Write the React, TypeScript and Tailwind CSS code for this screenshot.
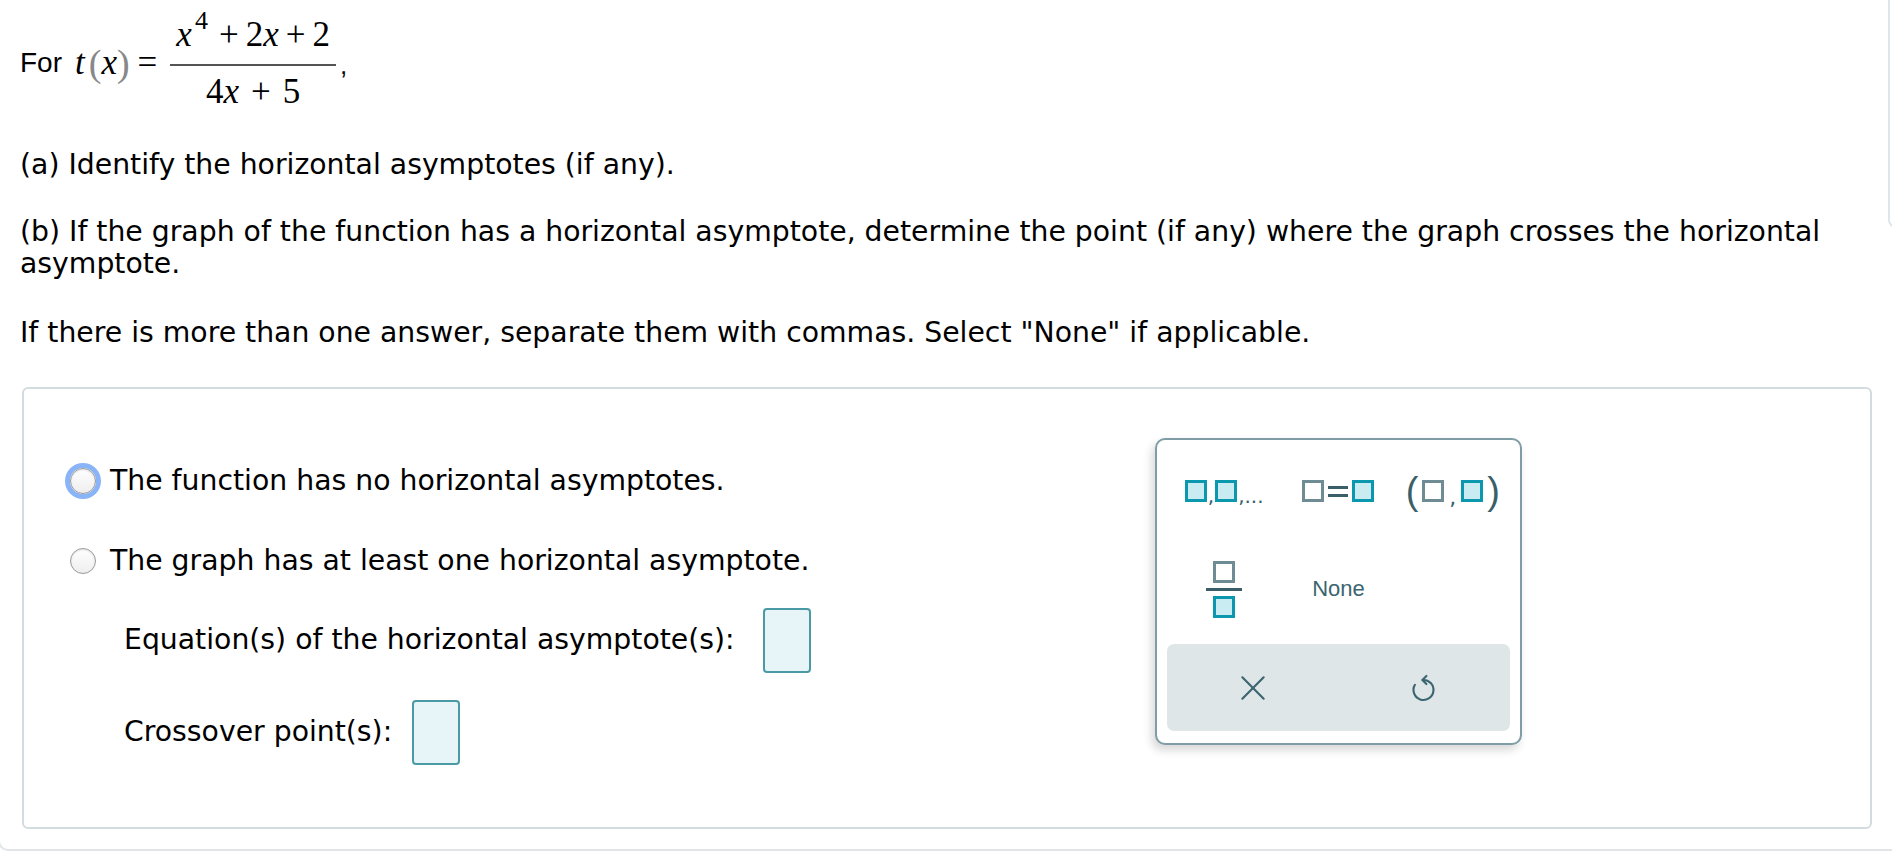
import React from "react";

const teal = "border-[#0b97ae] bg-[#c8ecf2]";
const gray = "border-[#6f8c94] bg-white";

function Sq({ kind, className = "" }: { kind: "t" | "g"; className?: string }) {
  return (
    <span
      className={`inline-block shrink-0 w-[22px] h-[22px] border-[3px] ${kind === "t" ? teal : gray} ${className}`}
    />
  );
}

function Radio({ focused }: { focused?: boolean }) {
  return (
    <span
      className={`inline-block shrink-0 w-[26px] h-[26px] rounded-full border border-[#9a9a9a] bg-gradient-to-b from-white to-[#eeeeee] shadow-[inset_0_1px_2px_rgba(0,0,0,0.12)] ${
        focused ? "ring-[5px] ring-[#8ab4f8]" : ""
      }`}
    />
  );
}

function InputBox({ className = "" }: { className?: string }) {
  return (
    <span
      className={`inline-block shrink-0 w-[48px] h-[65px] rounded-[4px] border-2 border-[#4a9aa6] bg-[#e7f4f8] ${className}`}
    />
  );
}

export default function App() {
  return (
    <div className="relative w-[1892px] h-[852px] overflow-hidden bg-white text-black font-['DejaVu_Sans',sans-serif]">
      {/* right-edge panel fragment */}
      <div className="absolute left-[1888px] top-[-10px] w-[30px] h-[238px] border-l-2 border-b-2 border-[#dfe5e8] rounded-bl-[8px]" />

      <div className="ml-[-2px] w-[1920px] h-[851px] border-l-2 border-b-2 border-[#dfe5e8] rounded-bl-[10px]">
        <div className="pl-[20px]">
          {/* math line */}
          <div className="flex items-center h-[126px] whitespace-nowrap">
            <span className="text-[28px] font-['Liberation_Sans',sans-serif] mr-[13px]">For</span>
            <span className="font-['Liberation_Serif',serif] text-[35px] flex items-center">
              <i className="mr-[4px]">t</i>
              <span className="text-[#888] text-[38px] font-light">(</span>
              <i>x</i>
              <span className="text-[#888] text-[38px] font-light">)</span>
              <span className="ml-[8px] mr-[13px]">=</span>
              <span className="inline-flex flex-col items-center">
                <span className="leading-[52px] px-[6px]">
                  <i>x</i>
                  <span className="relative top-[-17px] text-[26px] ml-[3px] mr-[4px]">4</span>
                  <span className="mx-[7px]">+</span>2<i>x</i>
                  <span className="mx-[7px]">+</span>2
                </span>
                <span className="block h-[2px] w-full bg-[#555]" />
                <span className="leading-[52px]">
                  4<i>x</i>
                  <span className="mx-[12px]">+</span>5
                </span>
              </span>
            </span>
            <span className="text-[26px] ml-[4px] mt-[4px] font-['Liberation_Sans',sans-serif]">,</span>
          </div>

          <div className="text-[28.3px]">
            <p className="leading-[32px] mt-[23px]">(a) Identify the horizontal asymptotes (if any).</p>
            <p className="leading-[32px] mt-[35px] whitespace-nowrap">
              (b) If the graph of the function has a horizontal asymptote, determine the point (if any) where the graph crosses the horizontal
              <br />
              asymptote.
            </p>
            <p className="leading-[32px] mt-[37px]">
              If there is more than one answer, separate them with commas. Select "None" if applicable.
            </p>
          </div>
        </div>

        {/* answer box */}
        <div className="relative ml-[22px] mt-[38px] w-[1850px] h-[442px] rounded-[6px] border-2 border-[#d3dcdf] text-[28.3px]">
          <div className="pl-[46px] pt-[77px]">
            <div className="flex items-center h-[30px]">
              <Radio focused />
              <span className="ml-[14px]">The function has no horizontal asymptotes.</span>
            </div>
            <div className="flex items-center h-[30px] mt-[50px]">
              <Radio />
              <span className="ml-[14px]">The graph has at least one horizontal asymptote.</span>
            </div>
            <div className="flex items-center ml-[54px] mt-[28px] h-[72px]">
              <span>Equation(s) of the horizontal asymptote(s):</span>
              <InputBox className="ml-[28px]" />
            </div>
            <div className="flex items-center ml-[54px] mt-[20px] h-[72px]">
              <span>Crossover point(s):</span>
              <InputBox className="ml-[20px]" />
            </div>
          </div>

          {/* palette popup */}
          <div className="absolute left-[1131px] top-[49px] w-[367px] h-[307px] rounded-[10px] border-2 border-[#7f9da4] bg-white shadow-[-3px_5px_10px_rgba(0,0,0,0.16)] px-[10px] pt-[8px]">
            <div className="grid grid-cols-3 h-[86px] items-center">
              <div className="flex items-end justify-center text-[#3b5f69]">
                <Sq kind="t" />
                <span className="text-[20px] leading-[12px] mx-[1px]">,</span>
                <Sq kind="t" />
                <span className="text-[20px] leading-[12px] ml-[1px]">,...</span>
              </div>
              <div className="flex items-center justify-center">
                <Sq kind="g" />
                <span className="mx-[4px] flex flex-col gap-[5px]">
                  <span className="block w-[20px] h-[3px] bg-[#3b5f69]" />
                  <span className="block w-[20px] h-[3px] bg-[#3b5f69]" />
                </span>
                <Sq kind="t" />
              </div>
              <div className="flex items-center justify-center text-[#3b5f69]">
                <span className="text-[38px] leading-[40px] font-['Liberation_Sans',sans-serif] font-light mr-[2px]">(</span>
                <Sq kind="g" className="mx-[2px]" />
                <span className="text-[22px] self-end mb-[8px] leading-[10px] mx-[3px]">,</span>
                <Sq kind="t" className="mx-[2px]" />
                <span className="text-[38px] leading-[40px] font-['Liberation_Sans',sans-serif] font-light ml-[2px]">)</span>
              </div>
            </div>
            <div className="grid grid-cols-3 h-[110px] items-center">
              <div className="flex flex-col items-center gap-[5px]">
                <Sq kind="g" />
                <span className="block w-[36px] h-[3px] bg-[#3b5f69]" />
                <Sq kind="t" />
              </div>
              <div className="flex justify-center mb-[2px]">
                <span className="text-[22px] text-[#3b6570] font-['Liberation_Sans',sans-serif]">None</span>
              </div>
              <div />
            </div>
            <div className="grid grid-cols-2 h-[87px] rounded-[7px] bg-[#dfe6e8] items-center">
              <div className="flex justify-center">
                <svg width="32" height="32" viewBox="0 0 24 24" fill="none" stroke="#3b6570" strokeWidth="1.6" strokeLinecap="round">
                  <path d="M4 4 L20 20 M20 4 L4 20" />
                </svg>
              </div>
              <div className="flex justify-center">
                <svg width="32" height="32" viewBox="0 0 24 24" fill="none" stroke="#3b6570" strokeWidth="1.6" strokeLinecap="round" strokeLinejoin="round">
                  <path d="M11 6 A7.5 7.5 0 1 1 5.2 9.6" />
                  <path d="M13.8 3 L10.8 6 L13.8 9" />
                </svg>
              </div>
            </div>
          </div>
        </div>
      </div>
    </div>
  );
}
